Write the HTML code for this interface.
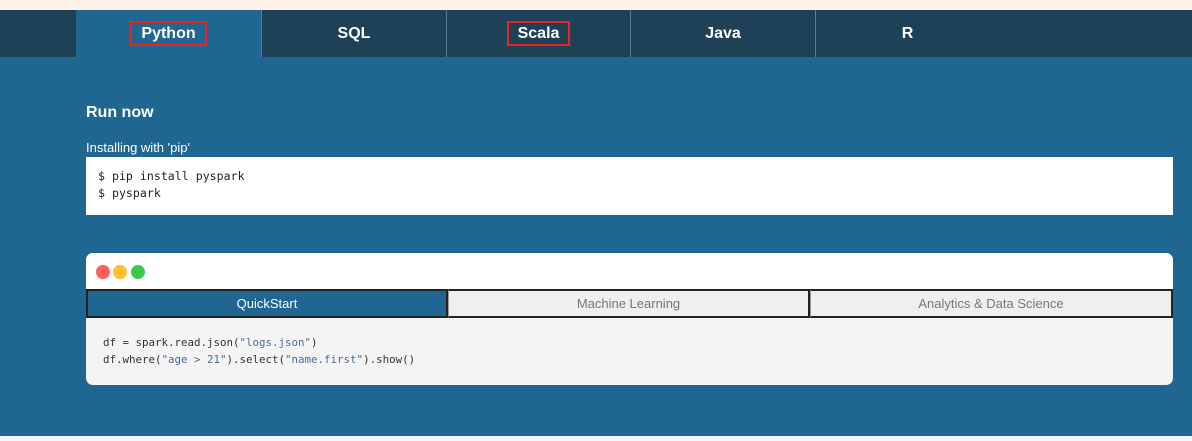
<!DOCTYPE html><html><head><style>
*{margin:0;padding:0;box-sizing:border-box}
body{width:1192px;height:441px;background:#1f6690;font-family:"Liberation Sans",sans-serif;position:relative;overflow:hidden}
.top{position:absolute;left:0;top:0;width:1192px;height:10px;background:#fdf3e9}
.nav{position:absolute;left:0;top:10px;width:1192px;height:47px;background:#1e4158}
.tab{position:absolute;top:0;height:47px;color:#fff;font-weight:bold;font-size:16px;line-height:47px;text-align:center;border-left:1px solid #5a7a8e}
.hl{border:2px solid #e22;padding:2px 9px}
.bot{position:absolute;left:0;top:436px;width:1192px;height:5px;background:#f0f8fe}
.mono{font-family:"DejaVu Sans Mono","Liberation Mono",monospace;line-height:17px}
</style></head><body>
<div class="top"></div>
<div class="nav">
<div class="tab" style="left:76px;width:185px;background:#1f6690;border-left:none"><span class="hl">Python</span></div>
<div class="tab" style="left:261px;width:185px">SQL</div>
<div class="tab" style="left:446px;width:184px"><span class="hl">Scala</span></div>
<div class="tab" style="left:630px;width:185px">Java</div>
<div class="tab" style="left:815px;width:184px">R</div>
</div>
<div style="position:absolute;left:86px;top:104px;color:#fff;font-weight:bold;font-size:16px">Run now</div>
<div style="position:absolute;left:86px;top:140px;color:#fff;font-size:13px">Installing with 'pip'</div>
<div class="mono" style="position:absolute;left:86px;top:157px;width:1087px;height:58px;background:#fff;padding:11px 12px;color:#222;font-size:11.6px">$ pip install pyspark<br>$ pyspark</div>
<div style="position:absolute;left:86px;top:253px;width:1087px;height:132px;background:#f4f4f4;border-radius:7px;overflow:hidden">
<div style="height:36px;background:#fff;position:relative">
<span style="position:absolute;left:10px;top:12px;width:14px;height:14px;border-radius:50%;background:#fe5f57"></span>
<span style="position:absolute;left:27px;top:12px;width:14px;height:14px;border-radius:50%;background:#febc2e"></span>
<span style="position:absolute;left:45px;top:12px;width:14px;height:14px;border-radius:50%;background:#3cc84a"></span>
</div>
<div style="display:flex;height:29px;font-size:13px;line-height:25px;text-align:center">
<div style="width:362px;background:#1f6690;color:#fff;border:2px solid #222">QuickStart</div>
<div style="width:362px;background:#efefef;color:#777;border:2px solid #222;border-left:1px solid #999">Machine Learning</div>
<div style="width:363px;background:#efefef;color:#777;border:2px solid #222;border-left:1px solid #999">Analytics &amp; Data Science</div>
</div>
<div class="mono" style="padding:16px 17px;color:#333;font-size:10.8px">df = spark.read.json(<span style="color:#4a6a9a">"logs.json"</span>)<br>df.where(<span style="color:#4a6a9a">"age &gt; 21"</span>).select(<span style="color:#4a6a9a">"name.first"</span>).show()</div>
</div>
<div class="bot"></div>
</body></html>
